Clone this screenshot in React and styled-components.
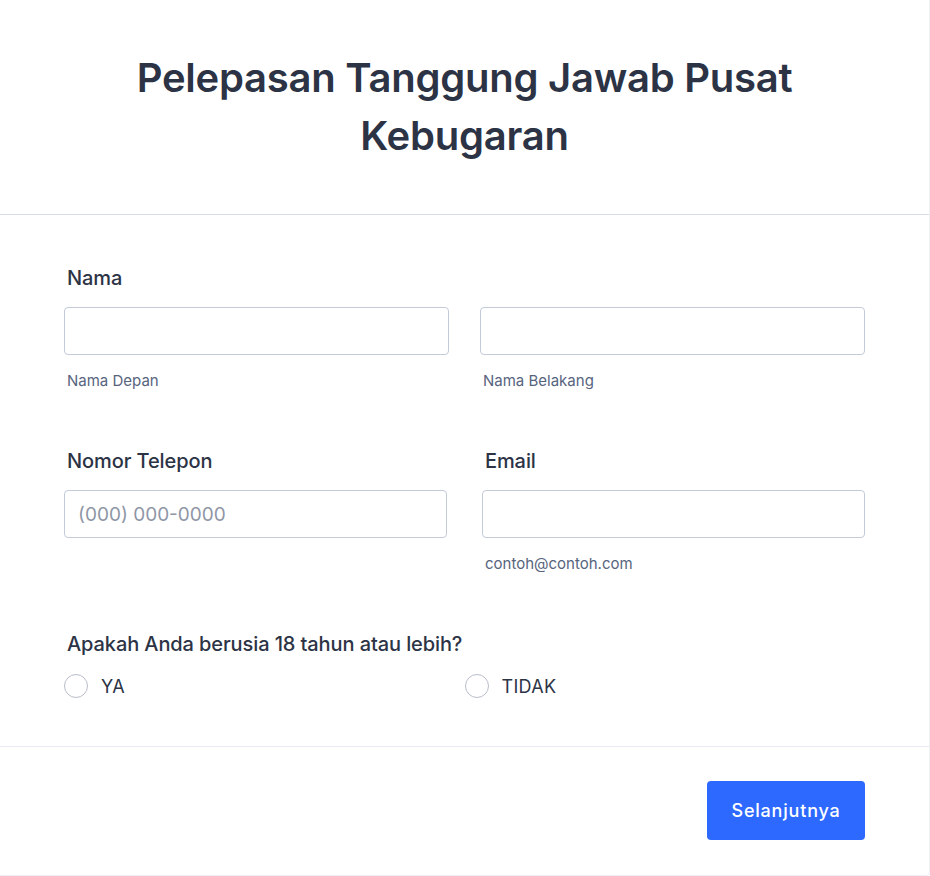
import React from "react";
import styled, { createGlobalStyle } from "styled-components";

const Global = createGlobalStyle`
  html, body { margin: 0; padding: 0; background: #fff; }
  body { font-family: Inter, "Noto Sans", sans-serif; color: #2c3345; }
  * { box-sizing: border-box; }
`;

const Card = styled.div`
  width: 930px;
  height: 876px;
  background: #fff;
  border-right: 1px solid #eef0f6;
  border-bottom: 1px solid #eef0f6;
  border-bottom-right-radius: 4px;
  display: flex;
  flex-direction: column;
`;

const Header = styled.header`
  padding: 49px 64px 0;
  height: 215px;
  border-bottom: 1px solid #d8dae9;
  display: flex;
  justify-content: center;
`;

const Title = styled.h1`
  margin: 0;
  font-size: 40px;
  line-height: 58px;
  font-weight: 600;
  letter-spacing: -0.25px;
  text-align: center;
  color: #2c3345;
  max-width: 700px;
`;

const Body = styled.section`
  padding: 51px 64px 0;
  height: 532px;
  border-bottom: 1px solid #eaebf2;
`;

const Row = styled.div`
  display: grid;
  grid-template-columns: 1fr 1fr;
  column-gap: ${(p) => p.$gap}px;
  margin-bottom: ${(p) => p.$mb}px;
`;

const Field = styled.div`
  display: flex;
  flex-direction: column;
`;

const Label = styled.div`
  font-size: 20px;
  line-height: 24px;
  font-weight: 500;
  letter-spacing: -0.1px;
  color: #2c3345;
  padding-left: 3px;
  margin-bottom: ${(p) => p.$mb ?? 17}px;
`;

const Input = styled.input`
  height: 48px;
  width: 100%;
  border: 1px solid #c3cad8;
  border-radius: 4px;
  padding: 0 13px;
  font-family: Inter, sans-serif;
  font-size: 19px;
  color: #2c3345;
  background: #fff;
  outline: none;
  &::placeholder { color: #8f96a6; }
`;

const Sub = styled.div`
  font-size: 15px;
  line-height: 18px;
  color: #57647e;
  padding-left: 3px;
  margin-top: 17px;
`;

const Radios = styled.div`
  display: grid;
  grid-template-columns: 1fr 1fr;
`;

const RadioItem = styled.label`
  display: flex;
  align-items: center;
  gap: 13px;
  font-size: 18px;
  letter-spacing: 0.3px;
  color: #2c3345;
  height: 24px;
`;

const Circle = styled.span`
  width: 24px;
  height: 24px;
  border-radius: 50%;
  border: 1px solid #b8bdc9;
  background: #fff;
  flex: none;
`;

const Footer = styled.footer`
  padding: 34px 64px 0;
  display: flex;
  justify-content: flex-end;
`;

const Button = styled.button`
  width: 158px;
  height: 59px;
  background: #2e69ff;
  color: #fff;
  border: none;
  border-radius: 4px;
  font-family: Inter, sans-serif;
  font-size: 18px;
  font-weight: 500;
  letter-spacing: 0.8px;
`;

export default function App() {
  return (
    <>
      <Global />
      <Card>
        <Header>
          <Title>Pelepasan Tanggung Jawab Pusat Kebugaran</Title>
        </Header>
        <Body>
          <Label>Nama</Label>
          <Row $gap={31} $mb={59}>
            <Field>
              <Input />
              <Sub>Nama Depan</Sub>
            </Field>
            <Field>
              <Input />
              <Sub>Nama Belakang</Sub>
            </Field>
          </Row>
          <Row $gap={35} $mb={59}>
            <Field>
              <Label>Nomor Telepon</Label>
              <Input placeholder="(000) 000-0000" />
            </Field>
            <Field>
              <Label>Email</Label>
              <Input />
              <Sub>contoh@contoh.com</Sub>
            </Field>
          </Row>
          <Label $mb={18}>Apakah Anda berusia 18 tahun atau lebih?</Label>
          <Radios>
            <RadioItem>
              <Circle />
              YA
            </RadioItem>
            <RadioItem>
              <Circle />
              TIDAK
            </RadioItem>
          </Radios>
        </Body>
        <Footer>
          <Button>Selanjutnya</Button>
        </Footer>
      </Card>
    </>
  );
}
